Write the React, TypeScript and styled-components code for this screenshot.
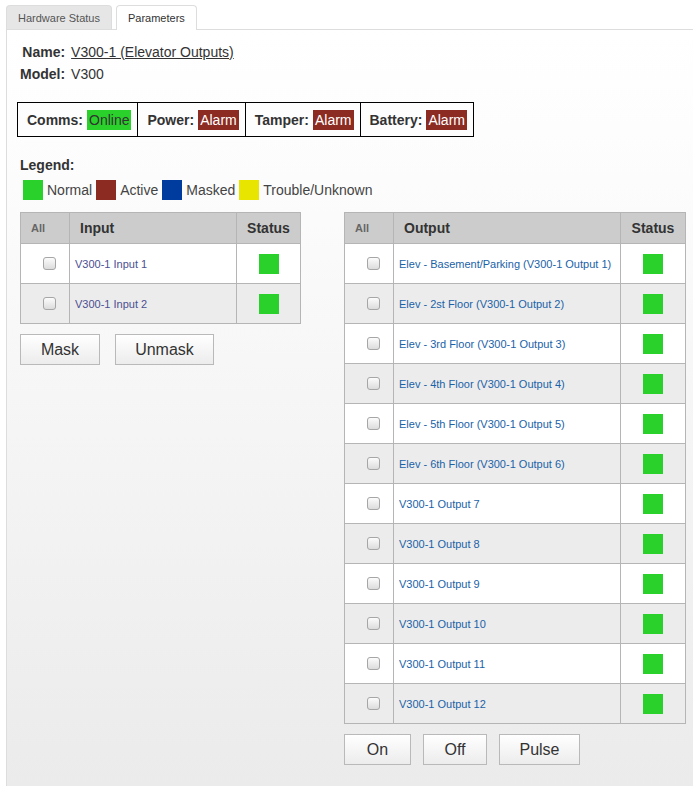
import { styled, createGlobalStyle } from "styled-components";

const GlobalStyle = createGlobalStyle`
  body {
    margin: 0;
    background: #fff;
    font-family: "Liberation Sans", Arial, sans-serif;
    color: #333;
  }
`;

const Page = styled.div`
  width: 693px;
  height: 786px;
  display: flex;
  flex-direction: column;
  padding-top: 5px;
  box-sizing: border-box;
  overflow: hidden;
`;

const TabBar = styled.div`
  display: flex;
  gap: 4px;
  padding-left: 6px;
  height: 24px;
`;

const Tab = styled.div<{ $active?: boolean }>`
  box-sizing: border-box;
  height: ${(p) => (p.$active ? "25px" : "24px")};
  padding: 0 11px;
  display: flex;
  align-items: center;
  font-size: 11px;
  color: ${(p) => (p.$active ? "#333" : "#555")};
  background: ${(p) => (p.$active ? "#fff" : "#e6e6e6")};
  border: 1px solid #ddd;
  border-bottom: none;
  border-radius: 4px 4px 0 0;
  position: relative;
  z-index: 1;
`;

const Panel = styled.div`
  flex: 1;
  margin-left: 6px;
  border-top: 1px solid #ddd;
  border-left: 1px solid #ddd;
  background: linear-gradient(#fff 0%, #fcfcfc 20%, #ebebeb 100%);
  padding: 11px 7px 0 13px;
  display: flex;
  flex-direction: column;
  align-items: flex-start;
`;

const InfoGrid = styled.div`
  display: grid;
  grid-template-columns: auto auto;
  column-gap: 6px;
  font-size: 14px;
  line-height: 22px;
`;

const InfoLabel = styled.span`
  font-weight: bold;
  text-align: right;
`;

const InfoLink = styled.a`
  color: #333;
  text-decoration: underline;
`;

const StatusTable = styled.div`
  margin: 17px 0 0 -3px;
  display: flex;
  border: 1px solid #000;
  height: 35px;
  box-sizing: border-box;
  font-size: 14px;
`;

const StatusCell = styled.div`
  display: flex;
  align-items: center;
  gap: 4px;
  padding: 0 6px 0 9px;
  & + & {
    border-left: 1px solid #000;
  }
`;

const Badge = styled.span<{ $bg: string; $fg: string }>`
  background: ${(p) => p.$bg};
  color: ${(p) => p.$fg};
  height: 20px;
  line-height: 20px;
  padding: 0 2px;
`;

const LegendTitle = styled.div`
  margin-top: 19px;
  font-size: 14px;
  font-weight: bold;
  line-height: 18px;
`;

const LegendRow = styled.div`
  margin-top: 6px;
  display: flex;
  align-items: center;
  padding-left: 3px;
  font-size: 14px;
  color: #444;
`;

const Swatch = styled.span<{ $color: string }>`
  display: inline-block;
  width: 20px;
  height: 20px;
  background: ${(p) => p.$color};
  margin-right: 4px;
`;

const LegendItem = styled.span`
  display: flex;
  align-items: center;
  margin-right: 4px;
`;

const Columns = styled.div`
  margin-top: 12px;
  display: flex;
  gap: 43px;
  align-items: flex-start;
`;

const Column = styled.div<{ $width: number }>`
  width: ${(p) => p.$width}px;
  display: flex;
  flex-direction: column;
`;

const Table = styled.table`
  border-collapse: collapse;
  width: 100%;
  table-layout: fixed;
`;

const Th = styled.th<{ $w?: number; $small?: boolean }>`
  box-sizing: border-box;
  ${(p) => (p.$w ? `width: ${p.$w}px;` : "")}
  background: #cccccc;
  border: 1px solid #b5b5b5;
  height: 31px;
  padding: 0 10px;
  text-align: left;
  font-size: ${(p) => (p.$small ? "11px" : "14px")};
  color: ${(p) => (p.$small ? "#666" : "#333")};
  font-weight: bold;
`;

const StatusTh = styled(Th)`
  text-align: center;
  padding: 0;
`;

const Tr = styled.tr<{ $alt: boolean }>`
  background: ${(p) => (p.$alt ? "#ececec" : "#fff")};
`;

const Td = styled.td`
  border: 1px solid #b5b5b5;
  height: 39px;
  padding: 0 5px;
  font-size: 11px;
  white-space: nowrap;
`;

const CheckTd = styled(Td)`
  text-align: center;
  padding: 0 0 0 8px;
`;

const StatusTd = styled(Td)`
  text-align: center;
  padding: 0;
`;

const Check = styled.input`
  appearance: none;
  width: 13px;
  height: 13px;
  margin: 0;
  vertical-align: middle;
  border: 1px solid #a6a6a6;
  border-radius: 3px;
  background: linear-gradient(#fcfcfc, #dcdcdc);
  box-sizing: border-box;
`;

const RowLink = styled.a<{ $visited?: boolean }>`
  color: ${(p) => (p.$visited ? "#4b4f92" : "#1a62a8")};
  text-decoration: none;
`;

const StatusBox = styled.span`
  display: inline-block;
  width: 20px;
  height: 20px;
  background: #2ad12a;
  vertical-align: middle;
`;

const ButtonRow = styled.div<{ $gap: number }>`
  display: flex;
  gap: ${(p) => p.$gap}px;
  margin-top: 10px;
`;

const Button = styled.button<{ $w: number }>`
  width: ${(p) => p.$w}px;
  height: 31px;
  border: 1px solid #b9b9b9;
  background: linear-gradient(#fff, #ececec);
  font-family: "Liberation Sans", Arial, sans-serif;
  font-size: 16px;
  color: #333;
  padding: 0;
`;

const inputs = ["V300-1 Input 1", "V300-1 Input 2"];

const outputs = [
  "Elev - Basement/Parking (V300-1 Output 1)",
  "Elev - 2st Floor (V300-1 Output 2)",
  "Elev - 3rd Floor (V300-1 Output 3)",
  "Elev - 4th Floor (V300-1 Output 4)",
  "Elev - 5th Floor (V300-1 Output 5)",
  "Elev - 6th Floor (V300-1 Output 6)",
  "V300-1 Output 7",
  "V300-1 Output 8",
  "V300-1 Output 9",
  "V300-1 Output 10",
  "V300-1 Output 11",
  "V300-1 Output 12",
];

const ioTable = (
  title: string,
  items: string[],
  midWidth: number,
  visited?: boolean
) => (
  <Table>
    <thead>
      <tr>
        <Th $w={49} $small>
          All
        </Th>
        <Th $w={midWidth}>{title}</Th>
        <StatusTh>Status</StatusTh>
      </tr>
    </thead>
    <tbody>
      {items.map((name, i) => (
        <Tr key={name} $alt={i % 2 === 1}>
          <CheckTd>
            <Check type="checkbox" />
          </CheckTd>
          <Td>
            <RowLink href="#" $visited={visited}>
              {name}
            </RowLink>
          </Td>
          <StatusTd>
            <StatusBox />
          </StatusTd>
        </Tr>
      ))}
    </tbody>
  </Table>
);

const App = () => {
  return (
    <Page>
      <GlobalStyle />
      <TabBar>
        <Tab>Hardware Status</Tab>
        <Tab $active>Parameters</Tab>
      </TabBar>
      <Panel>
        <InfoGrid>
          <InfoLabel>Name:</InfoLabel>
          <span>
            <InfoLink href="#">V300-1 (Elevator Outputs)</InfoLink>
          </span>
          <InfoLabel>Model:</InfoLabel>
          <span>V300</span>
        </InfoGrid>

        <StatusTable>
          <StatusCell>
            <b>Comms:</b>
            <Badge $bg="#2ad12a" $fg="#333">Online</Badge>
          </StatusCell>
          <StatusCell>
            <b>Power:</b>
            <Badge $bg="#8c2b22" $fg="#fff">Alarm</Badge>
          </StatusCell>
          <StatusCell>
            <b>Tamper:</b>
            <Badge $bg="#8c2b22" $fg="#fff">Alarm</Badge>
          </StatusCell>
          <StatusCell>
            <b>Battery:</b>
            <Badge $bg="#8c2b22" $fg="#fff">Alarm</Badge>
          </StatusCell>
        </StatusTable>

        <LegendTitle>Legend:</LegendTitle>
        <LegendRow>
          <LegendItem>
            <Swatch $color="#2ad12a" />
            Normal
          </LegendItem>
          <LegendItem>
            <Swatch $color="#8c2b22" />
            Active
          </LegendItem>
          <LegendItem>
            <Swatch $color="#003c9e" />
            Masked
          </LegendItem>
          <LegendItem>
            <Swatch $color="#e8e600" />
            Trouble/Unknown
          </LegendItem>
        </LegendRow>

        <Columns>
          <Column $width={281}>
            {ioTable("Input", inputs, 167, true)}
            <ButtonRow $gap={15}>
              <Button $w={80}>Mask</Button>
              <Button $w={99}>Unmask</Button>
            </ButtonRow>
          </Column>
          <Column $width={342}>
            {ioTable("Output", outputs, 227)}
            <ButtonRow $gap={12}>
              <Button $w={67}>On</Button>
              <Button $w={64}>Off</Button>
              <Button $w={81}>Pulse</Button>
            </ButtonRow>
          </Column>
        </Columns>
      </Panel>
    </Page>
  );
};

export default App;
